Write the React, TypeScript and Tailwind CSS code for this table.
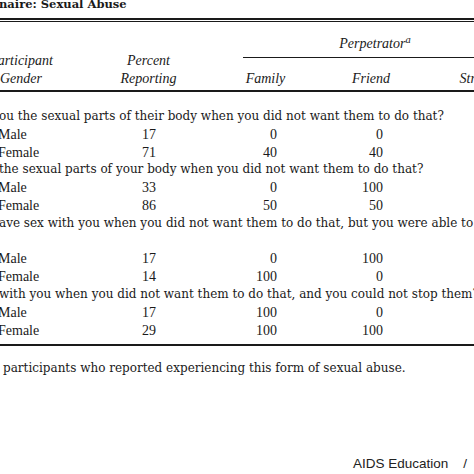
import React from "react";

type Row =
  | { kind: "q"; text: string }
  | { kind: "d"; g: string; p: string; fa: string; fr: string }
  | { kind: "blank" };

const rows: Row[] = [
  { kind: "q", text: "ou the sexual parts of their body when you did not want them to do that?" },
  { kind: "d", g: "Male", p: "17", fa: "0", fr: "0" },
  { kind: "d", g: "Female", p: "71", fa: "40", fr: "40" },
  { kind: "q", text: "the sexual parts of your body when you did not want them to do that?" },
  { kind: "d", g: "Male", p: "33", fa: "0", fr: "100" },
  { kind: "d", g: "Female", p: "86", fa: "50", fr: "50" },
  { kind: "q", text: "ave sex with you when you did not want them to do that, but you were able to stop them?" },
  { kind: "blank" },
  { kind: "d", g: "Male", p: "17", fa: "0", fr: "100" },
  { kind: "d", g: "Female", p: "14", fa: "100", fr: "0" },
  { kind: "q", text: "with you when you did not want them to do that, and you could not stop them?" },
  { kind: "d", g: "Male", p: "17", fa: "100", fr: "0" },
  { kind: "d", g: "Female", p: "29", fa: "100", fr: "100" },
];

export default function App() {
  return (
    <div className="w-[474px] h-[474px] overflow-hidden bg-white text-[#1a1a1a] font-['Liberation_Serif',serif] text-[14px]">
      <div className="ml-[-30px] w-[562px]">
        <div className="mt-[-2px] pl-[29px] font-['DejaVu_Serif',serif] text-[11.5px] leading-[13px] font-bold whitespace-nowrap">
          naire: Sexual Abuse
        </div>
        <div className="mt-[7px] h-[2px] bg-[#1a1a1a]" />
        <div className="mt-[1px] h-[1px] bg-[#1a1a1a]" />

        <div className="flex italic">
          <div className="w-[255px] flex pt-[30px] leading-[18px]">
            <div className="w-[102px] text-center">
              <div>Participant</div>
              <div>Gender</div>
            </div>
            <div className="w-[153px] text-center">
              <div>Percent</div>
              <div>Reporting</div>
            </div>
          </div>
          <div className="w-[307px] pt-[13px] leading-[17px]">
            <div className="text-center pr-[7px]">
              Perpetrator<sup>a</sup>
            </div>
            <div className="mt-[5px] ml-[18px] h-[1px] bg-[#1a1a1a]" />
            <div className="mt-[12px] flex">
              <div className="w-[81px] text-center">Family</div>
              <div className="w-[130px] text-center">Friend</div>
              <div className="w-[96px] text-center">Stranger</div>
            </div>
          </div>
        </div>

        <div className="mt-[2px] h-[2px] bg-[#1a1a1a]" />

        <div className="mt-[16px]">
          {rows.map((r, i) => {
            if (r.kind === "q")
              return (
                <div
                  key={i}
                  className="h-[17.8px] leading-[17.8px] pl-[29px] whitespace-nowrap font-['DejaVu_Serif',serif] text-[12px]"
                >
                  {r.text}
                </div>
              );
            if (r.kind === "blank") return <div key={i} className="h-[17.8px]" />;
            return (
              <div
                key={i}
                className="grid grid-cols-[102px_153px_81px_130px_96px] h-[17.8px] leading-[17.8px]"
              >
                <div className="pl-[28px]">{r.g}</div>
                <div className="text-right pr-[69px]">{r.p}</div>
                <div className="text-right pr-[29px]">{r.fa}</div>
                <div className="text-right pr-[53px]">{r.fr}</div>
                <div />
              </div>
            );
          })}
        </div>

        <div className="mt-[5px] h-[2px] bg-[#1a1a1a]" />

        <div className="mt-[13px] pl-[33px] leading-[18px] whitespace-nowrap font-['DejaVu_Serif',serif] text-[12px]">
          participants who reported experiencing this form of sexual abuse.
        </div>
      </div>

      <div className="mt-[78px] ml-[353px] whitespace-nowrap font-['Liberation_Sans',sans-serif] text-[13.5px] leading-[18px] text-[#222]">
        AIDS Education<span className="ml-[15px]">/</span>
      </div>
    </div>
  );
}
